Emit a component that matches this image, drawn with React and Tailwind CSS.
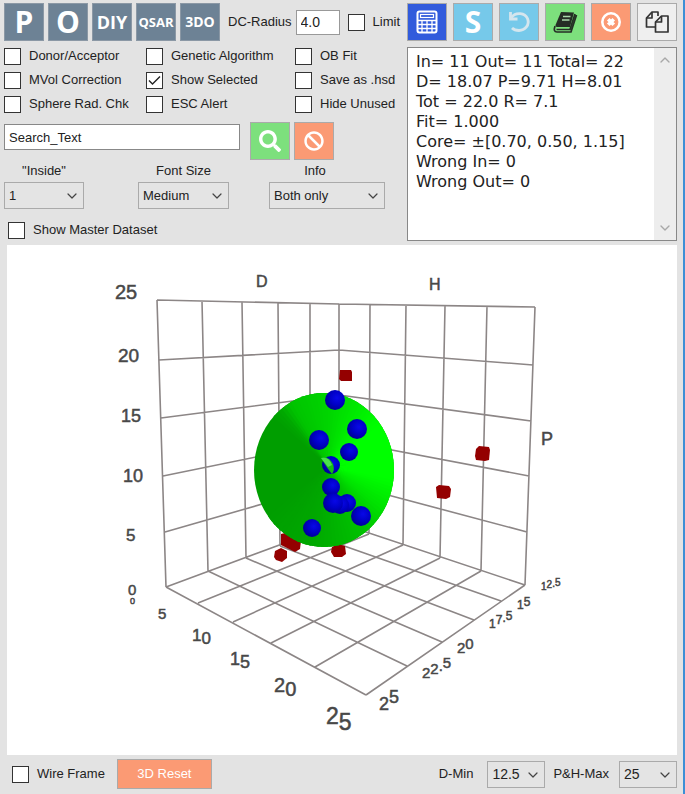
import React, { useState } from 'react';
import { ChevronDown, ChevronUp } from 'lucide-react';
import { FaSearch, FaBan } from 'react-icons/fa';

const MODES = [
  { label: 'P', size: 'text-[30px]' },
  { label: 'O', size: 'text-[30px]' },
  { label: 'DIY', size: 'text-[18px]' },
  { label: 'QSAR', size: 'text-[13px]' },
  { label: '3DO', size: 'text-[14px]' },
];

const OPTIONS = [
  'Donor/Acceptor', 'Genetic Algorithm', 'OB Fit',
  'MVol Correction', 'Show Selected', 'Save as .hsd',
  'Sphere Rad. Chk', 'ESC Alert', 'Hide Unused',
];

const RESULTS = `In= 11 Out= 11 Total= 22
D= 18.07 P=9.71 H=8.01
Tot = 22.0 R= 7.1
Fit= 1.000
Core= ±[0.70, 0.50, 1.15]
Wrong In= 0
Wrong Out= 0`;

// Cage geometry, already projected to the canvas
const leftTop = [[157, 300], [202, 301], [242, 302], [278, 303], [310, 303], [339, 304]];
const leftBottom = [[166, 587], [208, 571], [246, 558], [280, 546], [310, 534], [339, 523]];
const rightTop = [[339, 304], [370, 305], [406, 305], [445, 306], [487, 306], [535, 307]];
const rightBottom = [[339, 523], [369, 534], [403, 545], [440, 558], [481, 571], [525, 585]];
const frontLeft = [[166, 587], [198, 603], [233, 622], [271, 643], [315, 667], [366, 695]];
const frontRight = [[525, 585], [501, 601], [474, 620], [442, 642], [407, 666], [366, 695]];
const levelsLeft = [[157, 300], [159, 360], [161, 418], [163, 476], [165, 532]];
const levelsBack = [[339, 304], [339, 350], [339, 395], [339, 440], [339, 482]];
const levelsRight = [[535, 307], [533, 365], [531, 421], [529, 476], [527, 532]];

const segments = (a, b) => a.map((p, i) => `M${p.join(' ')}L${b[i].join(' ')}`).join('');

const cage = [
  segments(leftTop, leftBottom),
  segments(rightTop, rightBottom),
  segments(levelsLeft, levelsBack),
  segments(levelsBack, levelsRight),
  segments(frontLeft, rightBottom),
  segments([...leftBottom].reverse(), frontRight),
  'M525 585L366 695',
].join('');

const BALLS = [
  [335, 400, 10], [357, 429, 10], [319, 440, 10], [349, 452, 9], [331, 465, 9],
  [331, 487, 9], [347, 503, 9], [340, 505, 9], [333, 503, 10], [361, 516, 10], [312, 528, 9],
];

const CUBES = [
  'M340 370L351 370 352 372 352 381 341 381 339 379z',
  'M476 449L479 446 489 447 490 450 489 460 485 461 476 460 475 456z',
  'M436 487L439 485 449 486 451 489 450 497 446 499 437 498z',
  'M275 551L281 548 287 551 287 558 282 562 276 560 274 557z',
  'M281 534L289 532 294 537 301 541 300 549 295 552 281 545z',
  'M332 547L338 544 345 546 346 554 342 557 334 557 331 552z',
];

// Brightness of the sphere round its pole: [degrees, green]
const SHADES = [
  [-180, 158], [-140, 158], [-132, 168], [-122, 196], [-90, 214], [-60, 238],
  [-40, 255], [10, 255], [35, 228], [60, 194], [100, 168], [140, 158], [180, 158],
];

function shadeAt(deg) {
  const i = Math.max(1, SHADES.findIndex(([d]) => d >= deg));
  const [d0, g0] = SHADES[i - 1];
  const [d1, g1] = SHADES[i];
  return Math.round(g0 + ((deg - d0) / (d1 - d0)) * (g1 - g0));
}

// Only the lit part needs wedges, the rest is the flat base colour
const wedges = Array.from({ length: 92 }, (_, i) => {
  const from = -138 + i * 3;
  const point = (deg) => {
    const r = (deg * Math.PI) / 180;
    return `${(328 + Math.cos(r) * 110).toFixed(1)} ${(466 + Math.sin(r) * 110).toFixed(1)}`;
  };
  return { d: `M328 466L${point(from)}L${point(from + 5)}z`, g: shadeAt(from) };
});

const TICKS = [
  { t: '25', x: 115, y: 299, s: 20 },
  { t: '20', x: 118, y: 362, s: 19 },
  { t: '15', x: 121, y: 422, s: 18 },
  { t: '10', x: 123, y: 482, s: 18 },
  { t: '5', x: 126, y: 541, s: 17 },
  { t: '0', x: 128, y: 595, s: 15 },
  { t: '0', x: 130, y: 604, s: 9 },
  { t: '5', x: 158, y: 619, s: 15 },
  { t: '10', x: 192, y: 641, s: 17, dy: '0 3' },
  { t: '15', x: 230, y: 665, s: 18, dy: '0 3' },
  { t: '20', x: 274, y: 692, s: 20, dy: '0 4' },
  { t: '25', x: 326, y: 724, s: 23, dy: '0 6' },
  { t: '25', x: 379, y: 710, s: 18, dy: '0 -7' },
  { t: '22.5', x: 422, y: 678, s: 15, dy: '0 -4 -3 -3' },
  { t: '20', x: 457, y: 653, s: 15, dy: '0 -4' },
  { t: '17.5', x: 489, y: 628, s: 12, dy: '0 -4 -2 -2' },
  { t: '15', x: 517, y: 609, s: 12, dy: '0 -3' },
  { t: '12.5', x: 541, y: 590, s: 10, dy: '0 -2 -1 -1' },
];

function Check({ label, defaultChecked = false }) {
  return (
    <label className="flex items-center gap-2 whitespace-nowrap">
      <span className="relative flex">
        <input
          type="checkbox"
          defaultChecked={defaultChecked}
          className="peer h-[17px] w-[17px] appearance-none border border-[#333] bg-white"
        />
        <svg viewBox="0 0 17 17" className="pointer-events-none absolute inset-0 hidden peer-checked:block">
          <path d="M3 8.5L6.5 12L14 4.5" fill="none" stroke="#222" strokeWidth="1.4" />
        </svg>
      </span>
      {label}
    </label>
  );
}

function Picker({ id, options, className }) {
  return (
    <span className={`relative flex ${className}`}>
      <select id={id} className="h-[27px] w-full appearance-none border border-[#aaa] bg-[#e4e4e4] pl-1">
        {options.map((o) => <option key={o}>{o}</option>)}
      </select>
      <ChevronDown className="pointer-events-none absolute top-1.5 right-1 h-4 w-4 text-[#444]" strokeWidth={1.8} />
    </span>
  );
}

function Tool({ label, className, children }) {
  return (
    <button
      type="button"
      aria-label={label}
      className={`flex h-[38px] w-10 items-center justify-center border border-[#aaa] ${className}`}
    >
      {children}
    </button>
  );
}

function Plot() {
  return (
    <svg viewBox="7 245 670 510" className="block w-full bg-white">
      <defs>
        <radialGradient id="ball" cx="0.6" cy="0.4" r="0.6">
          <stop offset="0" stopColor="#0808e8" />
          <stop offset="0.6" stopColor="#0000c4" />
          <stop offset="1" stopColor="#000098" />
        </radialGradient>
        <clipPath id="sphere">
          <ellipse cx="324" cy="470" rx="70" ry="77" />
        </clipPath>
      </defs>

      <path d={cage} fill="none" stroke="#8c8686" strokeWidth="1.6" />
      {CUBES.map((d) => <path key={d} d={d} fill="#940000" />)}

      <g clipPath="url(#sphere)">
        <rect x="250" y="390" width="150" height="160" fill="rgb(0,158,0)" />
        {wedges.map(({ d, g }) => <path key={d} d={d} fill={`rgb(0,${g},0)`} />)}
      </g>
      {BALLS.map(([x, y, r]) => (
        <circle key={`${x}-${y}`} cx={x} cy={y} r={r} fill="url(#ball)" />
      ))}
      {/* pole of the sphere */}
      <path d="M321 458Q328 455 333 464Q335 470 332 474Q327 468 321 458z" fill="#14bd14" />
      <path d="M321 458Q329 456 332 465L328 467z" fill="#4be04b" />

      <g fontFamily="'Liberation Sans', sans-serif" fill="#484848" stroke="#484848" strokeWidth="0.5">
        {TICKS.map(({ t, x, y, s, dy }) => (
          <text key={`${x}-${y}`} x={x} y={y} dy={dy} fontSize={s}>{t}</text>
        ))}
        <text x="256" y="287" fontSize="16">D</text>
        <text x="429" y="290" fontSize="16">H</text>
        <text x="541" y="445" fontSize="18">P</text>
      </g>
    </svg>
  );
}

function App() {
  const [search, setSearch] = useState('Search_Text');

  return (
    <div className="border-r-2 border-[#3c8fd6] bg-[#e3e3e3] pb-1.5 font-['Liberation_Sans',Arial,sans-serif] text-[13px] leading-[18px] text-[#222]">
      <div className="flex gap-2 px-1 pt-[3px]">
        <div className="w-[395px] shrink-0">
          <div className="flex items-center gap-1">
            {MODES.map(({ label, size }) => (
              <button
                key={label}
                type="button"
                className={`flex h-[38px] w-10 shrink-0 items-center justify-center border border-[#8b98a5] bg-[#6d8295] font-['Open_Sans',sans-serif] font-bold text-white ${size}`}
              >
                {label}
              </button>
            ))}
            <label htmlFor="radius" className="ml-1 whitespace-nowrap">DC-Radius</label>
            <input id="radius" defaultValue="4.0" className="h-[25px] w-11 border border-[#999] bg-white px-1 text-[14px]" />
            <div className="ml-1">
              <Check label="Limit" />
            </div>
          </div>

          <div className="grid grid-cols-[142px_149px_1fr] pt-[3px]">
            {OPTIONS.map((label) => (
              <div key={label} className="flex h-6 items-center">
                <Check label={label} defaultChecked={label === 'Show Selected'} />
              </div>
            ))}
          </div>

          <div className="flex gap-1 pt-1.5">
            <input
              aria-label="Search text"
              value={search}
              onChange={(e) => setSearch(e.target.value)}
              className="mt-0.5 mr-1.5 h-[26px] w-[236px] border border-[#888] bg-white px-1"
            />
            <Tool label="Search" className="bg-[#7de07d] text-white"><FaSearch className="h-[22px] w-[22px]" /></Tool>
            <Tool label="Clear search" className="bg-[#fb9a74] text-white"><FaBan className="h-5 w-5" /></Tool>
          </div>

          <div className="flex pt-0.5 text-center">
            <div className="w-20">
              <label htmlFor="inside" className="block">"Inside"</label>
              <Picker id="inside" options={['1', '2', '3']} className="mt-0.5" />
            </div>
            <div className="ml-[54px] w-[91px]">
              <label htmlFor="font-size" className="block">Font Size</label>
              <Picker id="font-size" options={['Medium', 'Small', 'Large']} className="mt-0.5" />
            </div>
            <div className="ml-10 w-[116px]">
              <label htmlFor="info" className="block pr-6">Info</label>
              <Picker id="info" options={['Both only', 'All', 'None']} className="mt-0.5" />
            </div>
          </div>

          <div className="px-1 pt-3 pb-1.5">
            <Check label="Show Master Dataset" />
          </div>
        </div>

        <div className="flex min-w-0 flex-1 flex-col gap-1.5 pr-0.5 pb-1">
          <div className="flex justify-between">
            <Tool label="Calculate" className="bg-[#315bdc] text-white">
              <svg viewBox="0 0 24 24" className="h-6 w-6" fill="none" stroke="currentColor">
                <rect x="2.5" y="1.5" width="19" height="21" rx="2" strokeWidth="2" />
                <rect x="5.5" y="4.5" width="13" height="3" strokeWidth="1.2" />
                <path d="M3 10.5H21M3 14.5H21M3 18.5H21M7 10.5V22M12 10.5V22M17 10.5V22" strokeWidth="1.3" />
              </svg>
            </Tool>
            <Tool label="Solve" className="bg-[#76c9ea] font-['Open_Sans',sans-serif] text-[30px] font-bold text-white">S</Tool>
            <Tool label="Undo" className="bg-[#76c9ea] text-[#d5e6ee]">
              <svg viewBox="0 0 24 24" className="h-6 w-6" fill="none" stroke="currentColor" strokeWidth="2.8">
                <path d="M4.5 7.5C9 1.5 18 3 20.5 8.5C23 15 18 20.5 12 20.5C9 20.5 6.5 19.5 5 18" />
                <path d="M3.5 2V9H10.5" />
              </svg>
            </Tool>
            <Tool label="Manual" className="bg-[#7de07d] text-[#252d25]">
              <svg viewBox="0 0 26 26" className="h-[26px] w-[26px]">
                <path d="M9 3L22 3.5L18 18H5Q3 18 3.5 16z" fill="currentColor" />
                <path d="M3 17Q1 23 5 23H19L24.5 6M4.5 20.5H18L23 5" fill="none" stroke="currentColor" strokeWidth="1.7" />
                <path d="M11 7.5H18.5M10 11H17.5" stroke="#a9d8a9" strokeWidth="1.5" />
              </svg>
            </Tool>
            <Tool label="Stop" className="bg-[#fb9a74] text-white">
              <svg viewBox="0 0 24 24" className="h-[22px] w-[22px]" fill="none" stroke="currentColor">
                <circle cx="12" cy="12" r="9.5" strokeWidth="2.8" />
                <path d="M9 9L15 15M15 9L9 15" strokeWidth="4" />
              </svg>
            </Tool>
            <Tool label="Copy" className="bg-[#efefef] text-[#333]">
              <svg viewBox="0 0 26 26" className="h-[26px] w-[26px]" fill="none" stroke="currentColor" strokeWidth="1.7" strokeLinejoin="round">
                <path d="M11 18H2.5V9L8 3H14V7" />
                <path d="M2.5 9H8V3" />
                <path d="M17.5 7H24V23H11.5V13z" />
                <path d="M11.5 13H17.5V7" />
              </svg>
            </Tool>
          </div>

          <div className="flex flex-1 border border-[#888] bg-white">
            <textarea
              aria-label="Results"
              readOnly
              defaultValue={RESULTS}
              className="min-w-0 flex-1 resize-none overflow-hidden bg-white py-1 pl-2 font-['DejaVu_Sans',Verdana,sans-serif] text-[16px] leading-[20px] whitespace-pre"
            />
            <div className="flex w-[22px] flex-col items-center justify-between bg-[#ededed] py-1 text-[#a8a8a8]">
              <ChevronUp className="h-4 w-4" />
              <ChevronDown className="h-4 w-4" />
            </div>
          </div>
        </div>
      </div>

      <div className="pr-1.5 pl-[7px]">
        <Plot />
      </div>

      <div className="flex items-center pt-1 pr-1.5 pl-3">
        <Check label="Wire Frame" />
        <button type="button" className="ml-3 h-[30px] w-[95px] border border-[#aaa] bg-[#fb9a74] text-white">
          3D Reset
        </button>
        <label htmlFor="d-min" className="mr-3.5 ml-auto">D-Min</label>
        <Picker id="d-min" options={['12.5', '10', '0']} className="w-[58px] text-[14px]" />
        <label htmlFor="ph-max" className="mr-2.5 ml-2">P&amp;H-Max</label>
        <Picker id="ph-max" options={['25', '30', '40']} className="w-[58px] text-[14px]" />
      </div>
    </div>
  );
}

export default App;
